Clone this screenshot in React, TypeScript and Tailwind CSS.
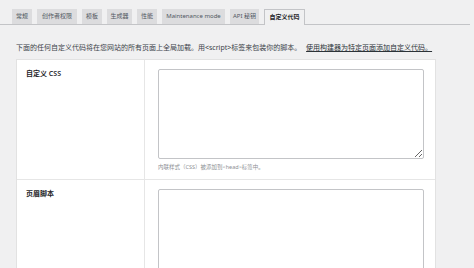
const tabs = [
  { label: "常规", w: "w-[20px]" },
  { label: "创作者权限", w: "w-[40px]" },
  { label: "模板", w: "w-[20px]" },
  { label: "生成器", w: "w-[25px]" },
  { label: "性能", w: "w-[20px]" },
  { label: "Maintenance mode", w: "w-[63px]" },
  { label: "API 秘钥", w: "w-[29px]" },
];

function Row({
  label,
  hint,
  last,
}: {
  label: string;
  hint?: string;
  last?: boolean;
}) {
  return (
    <div className={"flex" + (last ? "" : " border-b border-[#e6e6e6]")}>
      <div className="w-[128px] shrink-0 border-r border-[#e6e6e6] pl-[9px] pt-[9px] text-[7px] font-semibold leading-[9px] text-[#1d2327]">
        {label}
      </div>
      <div className="flex-1 pl-[13px] pr-[13px] pt-[9px] pb-[8px]">
        <textarea className="block h-[90px] w-[266px] rounded-[2px] border border-[#c3c4c7] bg-white" />
        {hint && (
          <p className="mt-[5px] text-[5.5px] leading-[7px] text-[#8c8f94]">{hint}</p>
        )}
      </div>
    </div>
  );
}

export default function App() {
  return (
    <div
      className="h-[268px] w-[474px] overflow-hidden bg-[#f0f0f1] text-[#3c434a]"
      style={{ fontFamily: '"Noto Sans", "Noto Sans CJK SC", sans-serif' }}
    >
      {/* Tabs */}
      <div className="mr-[4px] flex items-end gap-[5px] border-b border-[#c3c4c7] pl-[12px] pt-[9px]">
        {tabs.map((t) => (
          <div
            key={t.label}
            className={`${t.w} flex h-[15px] items-center justify-center whitespace-nowrap bg-[#dcdcde] text-[6px] text-[#50575e]`}
          >
            {t.label}
          </div>
        ))}
        <div className="-mb-px flex h-[16px] w-[41px] items-center justify-center border border-b-0 border-[#c3c4c7] bg-[#f0f0f1] text-[6px] font-semibold text-[#1d2327]">
          自定义代码
        </div>
      </div>

      {/* Description */}
      <p className="ml-[16px] mt-[18px] whitespace-nowrap text-[7px] leading-[10px]">
        下面的任何自定义代码将在您网站的所有页面上全局加载。用&lt;script&gt;标签来包装你的脚本。{" "}
        <span className="ml-[3px] text-[#2c3338] underline">使用构建器为特定页面添加自定义代码。</span>
      </p>

      {/* Settings card */}
      <div className="ml-[16px] mt-[6px] w-[420px] border border-[#e2e2e2] bg-white">
        <Row label="自定义 CSS" hint="内联样式（CSS）被添加到<head>标签中。" />
        <Row label="页眉脚本" last />
      </div>
    </div>
  );
}
